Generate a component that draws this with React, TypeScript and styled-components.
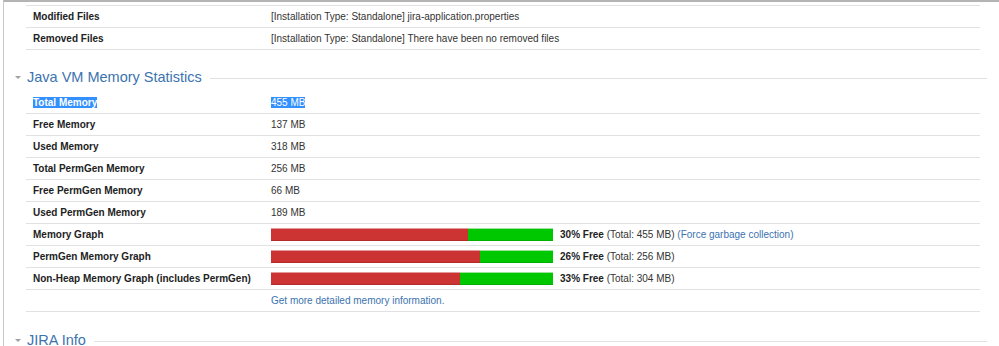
import React from "react";
import styled, { createGlobalStyle } from "styled-components";

const Global = createGlobalStyle`
  html, body { margin: 0; padding: 0; background: #fff; }
  body { font-family: "Liberation Sans", Arial, sans-serif; color: #333; }
`;

const Page = styled.div`
  margin-left: 3px;
  border-left: 1px solid #c8c8c8;
  border-top: 2px solid #b4b4b4;
  height: 344px;
  overflow: hidden;
  padding: 3px 12px 0 22px;
`;

const Table = styled.div<{ $top?: boolean; $mt?: number }>`
  width: 954px;
  margin-top: ${(p) => p.$mt ?? 0}px;
  border-top: ${(p) => (p.$top ? "1px solid #e1e1e1" : "none")};
`;

const Row = styled.div`
  display: grid;
  grid-template-columns: 245px 1fr;
  align-items: center;
  box-sizing: border-box;
  height: 22px;
  border-bottom: 1px solid #e1e1e1;
  font-size: 10px;
`;

const Label = styled.div`
  padding-left: 7px;
  font-weight: bold;
  color: #222;
`;

const Value = styled.div`
  display: flex;
  align-items: center;
  gap: 7px;
  color: #333;
`;

const Selected = styled.span`
  background: #3390ff;
  color: #fff;
`;

const SectionHead = styled.div<{ $mt: number }>`
  display: flex;
  align-items: center;
  gap: 6px;
  margin-top: ${(p) => p.$mt}px;
  margin-left: -11px;
  width: 972px;
  height: 20px;
`;

const Caret = styled.span`
  width: 0;
  height: 0;
  border-left: 3.5px solid transparent;
  border-right: 3.5px solid transparent;
  border-top: 3.5px solid #a0a0a0;
  margin-top: 1px;
`;

const HeadText = styled.span`
  font-size: 14.5px;
  color: #3b73af;
  white-space: nowrap;
`;

const HeadRule = styled.span`
  flex: 1;
  height: 1px;
  background: #e1e1e1;
  margin-left: 2px;
  margin-top: 2px;
`;

const Bar = styled.div`
  display: flex;
  width: 282px;
  height: 13px;
`;

const Used = styled.div`
  background: #cc3333;
  border-top: 1px solid #e29a9a;
  border-bottom: 1px solid #b52a2a;
  box-sizing: border-box;
`;

const Free = styled.div`
  flex: 1;
  background: #00c800;
  border-top: 1px solid #9be39b;
  border-bottom: 1px solid #00b000;
  box-sizing: border-box;
`;

const Strong = styled.b`
  color: #222;
`;

const Link = styled.a`
  color: #3b73af;
  text-decoration: none;
`;

const LinkCell = styled.div`
  grid-column: 2;
`;

const plain: [string, string][] = [
  ["Free Memory", "137 MB"],
  ["Used Memory", "318 MB"],
  ["Total PermGen Memory", "256 MB"],
  ["Free PermGen Memory", "66 MB"],
  ["Used PermGen Memory", "189 MB"],
];

const graphs = [
  { label: "Memory Graph", free: 30, total: "455 MB", gc: true },
  { label: "PermGen Memory Graph", free: 26, total: "256 MB", gc: false },
  { label: "Non-Heap Memory Graph (includes PermGen)", free: 33, total: "304 MB", gc: false },
];

export default function App() {
  return (
    <>
      <Global />
      <Page>
        <Table $top>
          <Row>
            <Label>Modified Files</Label>
            <Value>[Installation Type: Standalone] jira-application.properties</Value>
          </Row>
          <Row>
            <Label>Removed Files</Label>
            <Value>[Installation Type: Standalone] There have been no removed files</Value>
          </Row>
        </Table>

        <SectionHead $mt={17}>
          <Caret />
          <HeadText>Java VM Memory Statistics</HeadText>
          <HeadRule />
        </SectionHead>

        <Table $mt={5}>
          <Row>
            <Label>
              <Selected>Total Memory</Selected>
            </Label>
            <Value>
              <Selected>455 MB</Selected>
            </Value>
          </Row>
          {plain.map(([l, v]) => (
            <Row key={l}>
              <Label>{l}</Label>
              <Value>{v}</Value>
            </Row>
          ))}
          {graphs.map((g) => (
            <Row key={g.label}>
              <Label>{g.label}</Label>
              <Value>
                <Bar>
                  <Used style={{ width: `${100 - g.free}%` }} />
                  <Free />
                </Bar>
                <span>
                  <Strong>{g.free}% Free</Strong> (Total: {g.total})
                  {g.gc && (
                    <>
                      {" "}
                      <Link href="#">(Force garbage collection)</Link>
                    </>
                  )}
                </span>
              </Value>
            </Row>
          ))}
          <Row>
            <LinkCell>
              <Link href="#">Get more detailed memory information.</Link>
            </LinkCell>
          </Row>
        </Table>

        <SectionHead $mt={18}>
          <Caret />
          <HeadText>JIRA Info</HeadText>
          <HeadRule />
        </SectionHead>
      </Page>
    </>
  );
}
